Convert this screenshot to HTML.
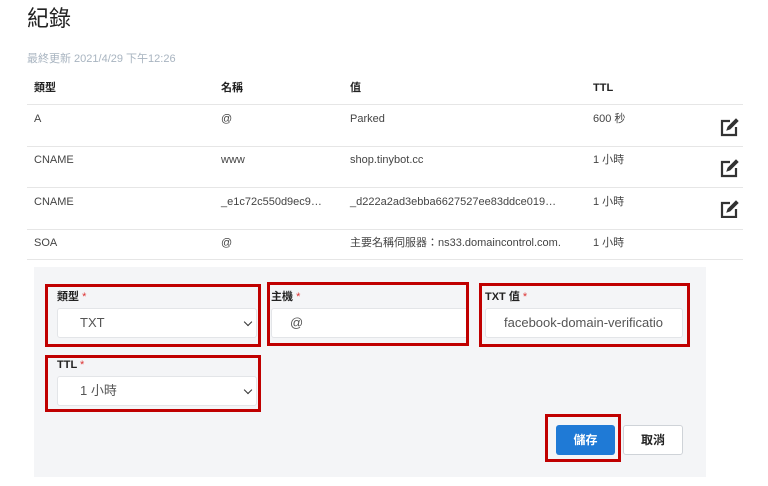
<!DOCTYPE html><html><head><meta charset="utf-8"><style>
body{margin:0;width:768px;height:486px;background:#fff;position:relative;overflow:hidden;font-family:"Liberation Sans","Noto Sans CJK TC",sans-serif;color:#333}
.a{position:absolute;white-space:nowrap}
.t{font-size:11px;color:#444;line-height:14px}
.h{font-size:11px;font-weight:bold;color:#222;line-height:14px}
.ln{position:absolute;left:27px;width:716px;height:1px;background:#e6e6e6}
.red{position:absolute;border:3px solid #c00000;box-sizing:border-box}
.in{position:absolute;background:#fff;border:1px solid #e3e5e8;border-radius:3px;box-sizing:border-box;font-size:13px;color:#555;line-height:28px}
.lab{font-size:11px;font-weight:bold;color:#222;line-height:14px}
.lab b{color:#d33;font-weight:normal}
.chev{position:absolute;right:5px;top:10px;width:5px;height:5px;border-right:1.5px solid #333;border-bottom:1.5px solid #333;transform:rotate(45deg)}
</style></head><body>
<div class="a" style="left:27px;top:5px;font-size:22px;line-height:28px;color:#222">紀錄</div>
<div class="a" style="left:27px;top:52px;font-size:11px;line-height:14px;color:#a8b4c0">最終更新 2021/4/29 下午12:26</div>
<div class="a h" style="left:34px;top:81px">類型</div>
<div class="a h" style="left:221px;top:81px">名稱</div>
<div class="a h" style="left:350px;top:81px">值</div>
<div class="a h" style="left:593px;top:81px">TTL</div>
<div class="ln" style="top:104px"></div>
<div class="a t" style="left:34px;top:112px">A</div><div class="a t" style="left:221px;top:112px">@</div><div class="a t" style="left:350px;top:112px">Parked</div><div class="a t" style="left:593px;top:112px">600 秒</div>
<div class="ln" style="top:146px"></div>
<div class="a t" style="left:34px;top:153px">CNAME</div><div class="a t" style="left:221px;top:153px">www</div><div class="a t" style="left:350px;top:153px">shop.tinybot.cc</div><div class="a t" style="left:593px;top:153px">1 小時</div>
<div class="ln" style="top:187px"></div>
<div class="a t" style="left:34px;top:195px">CNAME</div><div class="a t" style="left:221px;top:195px">_e1c72c550d9ec9…</div><div class="a t" style="left:350px;top:195px">_d222a2ad3ebba6627527ee83ddce019…</div><div class="a t" style="left:593px;top:195px">1 小時</div>
<div class="ln" style="top:229px"></div>
<div class="a t" style="left:34px;top:236px">SOA</div><div class="a t" style="left:221px;top:236px">@</div><div class="a t" style="left:350px;top:236px">主要名稱伺服器：ns33.domaincontrol.com.</div><div class="a t" style="left:593px;top:236px">1 小時</div>
<div class="ln" style="top:259px"></div>
<svg class="a" style="left:720px;top:118px" width="20" height="100" viewBox="0 0 20 100">
<g fill="none" stroke="#333" stroke-width="2.2"><path d="M10 3H2v14h14V9"/><path d="M7 12l1-3 8-8 2 2-8 8z" fill="#333" stroke-width="1"/></g>
<g fill="none" stroke="#333" stroke-width="2.2" transform="translate(0,41)"><path d="M10 3H2v14h14V9"/><path d="M7 12l1-3 8-8 2 2-8 8z" fill="#333" stroke-width="1"/></g>
<g fill="none" stroke="#333" stroke-width="2.2" transform="translate(0,82)"><path d="M10 3H2v14h14V9"/><path d="M7 12l1-3 8-8 2 2-8 8z" fill="#333" stroke-width="1"/></g>
</svg>
<div class="a" style="left:34px;top:267px;width:672px;height:210px;background:#f4f5f7"></div>
<div class="a lab" style="left:57px;top:290px">類型 <b>*</b></div>
<div class="in" style="left:57px;top:308px;width:200px;height:30px;padding-left:22px">TXT<span class="chev"></span></div>
<div class="a lab" style="left:271px;top:290px">主機 <b>*</b></div>
<div class="in" style="left:271px;top:308px;width:198px;height:30px;padding-left:18px">@</div>
<div class="a lab" style="left:485px;top:290px">TXT 值 <b>*</b></div>
<div class="in" style="left:485px;top:308px;width:198px;height:30px;padding-left:18px;overflow:hidden">facebook-domain-verificatio</div>
<div class="a lab" style="left:57px;top:358px">TTL <b>*</b></div>
<div class="in" style="left:57px;top:376px;width:200px;height:30px;padding-left:22px">1 小時<span class="chev"></span></div>
<div class="a" style="left:556px;top:425px;width:59px;height:30px;background:#1f7ad6;border-radius:3px;color:#fff;font-size:12px;font-weight:bold;text-align:center;line-height:30px">儲存</div>
<div class="a" style="left:623px;top:425px;width:60px;height:30px;background:#fff;border:1px solid #cfd3d8;box-sizing:border-box;border-radius:3px;color:#222;font-size:12px;font-weight:bold;text-align:center;line-height:28px">取消</div>
<div class="red" style="left:45px;top:284px;width:216px;height:63px"></div>
<div class="red" style="left:267px;top:282px;width:202px;height:64px"></div>
<div class="red" style="left:479px;top:283px;width:211px;height:64px"></div>
<div class="red" style="left:45px;top:355px;width:216px;height:57px"></div>
<div class="red" style="left:545px;top:414px;width:76px;height:48px"></div>
</body></html>
